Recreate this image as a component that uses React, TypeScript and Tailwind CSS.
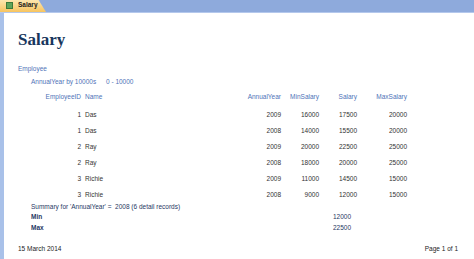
const rows = [
  { id: 1, name: "Das", year: 2009, min: 16000, sal: 17500, max: 20000 },
  { id: 1, name: "Das", year: 2008, min: 14000, sal: 15500, max: 20000 },
  { id: 2, name: "Ray", year: 2009, min: 20000, sal: 22500, max: 25000 },
  { id: 2, name: "Ray", year: 2008, min: 18000, sal: 20000, max: 25000 },
  { id: 3, name: "Richie", year: 2009, min: 11000, sal: 14500, max: 15000 },
  { id: 3, name: "Richie", year: 2008, min: 9000, sal: 12000, max: 15000 },
]

export default function App() {
  return (
    <div className="w-[474px] h-[259px] bg-white overflow-hidden flex flex-col font-['Liberation_Sans',Arial,sans-serif]">
      {/* tab strip */}
      <div className="h-[13px] shrink-0 bg-[#8eaadc] border-b border-[#b4c8ec] flex items-end">
        <div className="h-[13px] w-[46px] bg-gradient-to-b from-[#fde9b4] to-[#f7c45e] [clip-path:polygon(0_0,38px_0,46px_100%,0_100%)] flex items-center pl-[6px] gap-[5px]">
          <div className="w-[7px] h-[7px] bg-[#5fa45a] border border-[#3c7a3a]" />
          <span className="text-[6.5px] font-bold text-[#1b1b1b] leading-none">Salary</span>
        </div>
      </div>

      <div className="flex flex-1">
        <div className="w-[4px] bg-[#a9c1e9]" />
        <div className="flex-1 pl-[14px] pr-[16px] text-[6.5px]">
          <div className="pt-[17px] h-[37px] text-[17px] leading-[20px] font-bold text-[#17365d] font-['Liberation_Serif',serif]">
            Salary
          </div>

          <div className="mt-[13px] h-[12px] leading-[12px] text-[#4f73b8]">Employee</div>

          <div className="mt-[1px] h-[12px] leading-[12px] text-[#4f73b8] pl-[13px] flex">
            <span className="w-[75px]">AnnualYear by 10000s</span>
            <span>0 - 10000</span>
          </div>

          <div className="mt-[3px] h-[12px] leading-[12px] text-[#4f73b8] flex">
            <span className="w-[63px] text-right">EmployeeID</span>
            <span className="w-[4px]" />
            <span className="w-[150px]">Name</span>
            <span className="w-[46px] text-right">AnnualYear</span>
            <span className="w-[38px] text-right">MinSalary</span>
            <span className="w-[38px] text-right">Salary</span>
            <span className="w-[50px] text-right">MaxSalary</span>
          </div>

          <div className="mt-[4px]">
            {rows.map((r, i) => (
              <div key={i} className="h-[16px] leading-[16px] text-[#333333] flex">
                <span className="w-[63px] text-right">{r.id}</span>
                <span className="w-[4px]" />
                <span className="w-[150px]">{r.name}</span>
                <span className="w-[46px] text-right">{r.year}</span>
                <span className="w-[38px] text-right">{r.min}</span>
                <span className="w-[38px] text-right">{r.sal}</span>
                <span className="w-[50px] text-right">{r.max}</span>
              </div>
            ))}
          </div>

          <div className="pl-[13px] text-[#1f3864]">
            <div className="h-[8px] leading-[8px]">Summary for 'AnnualYear' =&nbsp; 2008 (6 detail records)</div>
            <div className="mt-[1px] h-[10px] leading-[10px] flex">
              <span className="w-[302px] font-bold">Min</span>
              <span>12000</span>
            </div>
            <div className="mt-[1px] h-[10px] leading-[10px] flex">
              <span className="w-[302px] font-bold">Max</span>
              <span>22500</span>
            </div>
          </div>

          <div className="mt-[11px] h-[10px] leading-[10px] text-[#1b1b1b] flex justify-between pr-[0px]">
            <span>15 March 2014</span>
            <span>Page 1 of 1</span>
          </div>
        </div>
      </div>
    </div>
  )
}
